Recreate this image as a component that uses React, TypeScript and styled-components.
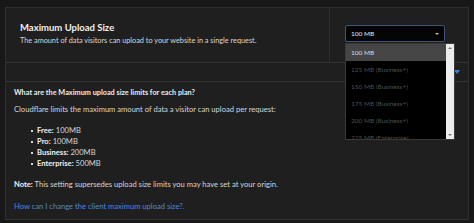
import styled, { createGlobalStyle } from 'styled-components'

const GlobalStyle = createGlobalStyle`
  html, body {
    margin: 0;
    padding: 0;
    background: #181818;
  }
  body {
    font-family: Lato, 'Open Sans', sans-serif;
    color: #e6e6e6;
  }
`

const Page = styled.div`
  width: 474px;
  height: 223px;
  overflow: hidden;
  padding: 7px 5px 0 5px;
  box-sizing: border-box;
`

const Card = styled.div`
  background: #1f1f1f;
  border: 1px solid #2e2e2e;
  border-bottom: none;
`

const SettingRow = styled.div`
  display: grid;
  grid-template-columns: 324px 1fr;
  height: 54px;
  border-bottom: 1px solid #333;
`

const Info = styled.div`
  padding: 13px 0 0 14px;
  border-right: 1px solid #2e2e2e;
`

const Title = styled.div`
  font-size: 9.5px;
  font-weight: 700;
  color: #f0f0f0;
  line-height: 13px;
`

const Description = styled.div`
  margin-top: 1px;
  font-size: 7.3px;
  color: #d8d8d8;
  line-height: 11px;
  white-space: nowrap;
`

const Control = styled.div`
  position: relative;
  padding: 17px 0 0 15px;
`

const Select = styled.div`
  width: 100px;
  height: 17px;
  box-sizing: border-box;
  background: #050505;
  border: 1px solid #3e5478;
  border-radius: 2px;
  display: flex;
  align-items: center;
  justify-content: space-between;
  padding: 0 5px;
  font-size: 6.5px;
  color: #e8e8e8;
`

const Caret = styled.span`
  width: 0;
  height: 0;
  border-left: 2px solid transparent;
  border-right: 2px solid transparent;
  border-top: 2px solid #bbb;
`

const Menu = styled.div`
  position: absolute;
  left: 15px;
  top: 35px;
  width: 108px;
  height: 95px;
  display: flex;
  background: #000;
  border: 1px solid #3a3a3a;
  z-index: 2;
  overflow: hidden;
`

const Options = styled.div`
  flex: 1;
`

const Option = styled.div<{ $active?: boolean }>`
  height: 17px;
  line-height: 17px;
  padding-left: 5px;
  font-size: 6.5px;
  white-space: nowrap;
  background: ${p => (p.$active ? '#454545' : 'transparent')};
  color: ${p => (p.$active ? '#dcdcdc' : '#4e4e4e')};
`

const Scrollbar = styled.div`
  width: 8px;
  background: #ececec;
  display: flex;
  flex-direction: column;
  justify-content: space-between;
  align-items: center;
  padding: 3px 0;
  box-sizing: border-box;
`

const Arrow = styled.span<{ $up?: boolean }>`
  width: 0;
  height: 0;
  border-left: 2px solid transparent;
  border-right: 2px solid transparent;
  ${p => (p.$up ? 'border-bottom: 2px solid #777;' : 'border-top: 2px solid #777;')}
`

const ToggleRow = styled.div`
  height: 18px;
  display: flex;
  justify-content: flex-end;
  align-items: center;
  padding-right: 8px;
  border-bottom: 1px solid #333;
`

const Chevron = styled.span`
  width: 0;
  height: 0;
  border-left: 3.5px solid transparent;
  border-right: 3.5px solid transparent;
  border-top: 4px solid #3d7fe0;
`

const Details = styled.div`
  height: 138px;
  padding: 5px 0 0 8px;
  box-sizing: border-box;
  border-bottom: 1px solid #333;
  font-size: 7.6px;
  line-height: 11px;
  color: #d6d6d6;
`

const Question = styled.div`
  font-size: 7.3px;
  font-weight: 700;
  color: #ececec;
`

const Paragraph = styled.p`
  margin: 6px 0 0;
`

const PlanList = styled.ul`
  margin: 10px 0 0;
  padding-left: 23px;
  list-style: none;
`

const Plan = styled.li`
  position: relative;
  line-height: 11px;
  &::before {
    content: '';
    position: absolute;
    left: -6px;
    top: 5px;
    width: 2px;
    height: 2px;
    background: #d6d6d6;
  }
`

const Strong = styled.strong`
  font-weight: 700;
  color: #f0f0f0;
`

const Note = styled.p`
  margin: 10px 0 0;
`

const HelpLink = styled.a`
  display: block;
  margin-top: 11px;
  color: #4f86dc;
  text-decoration: none;
`

const options = [
  '100 MB',
  '125 MB (Business+)',
  '150 MB (Business+)',
  '175 MB (Business+)',
  '200 MB (Business+)',
  '225 MB (Enterprise)'
]

const plans = [
  ['Free:', '100MB'],
  ['Pro:', '100MB'],
  ['Business:', '200MB'],
  ['Enterprise:', '500MB']
]

export default function App() {
  return (
    <Page>
      <GlobalStyle />
      <Card>
        <SettingRow>
          <Info>
            <Title>Maximum Upload Size</Title>
            <Description>
              The amount of data visitors can upload to your website in a single request.
            </Description>
          </Info>
          <Control>
            <Select>
              100 MB
              <Caret />
            </Select>
            <Menu>
              <Options>
                {options.map((o, i) => (
                  <Option key={o} $active={i === 0}>
                    {o}
                  </Option>
                ))}
              </Options>
              <Scrollbar>
                <Arrow $up />
                <Arrow />
              </Scrollbar>
            </Menu>
          </Control>
        </SettingRow>
        <ToggleRow>
          <Chevron />
        </ToggleRow>
        <Details>
          <Question>What are the Maximum upload size limits for each plan?</Question>
          <Paragraph>
            Cloudflare limits the maximum amount of data a visitor can upload per request:
          </Paragraph>
          <PlanList>
            {plans.map(([name, size]) => (
              <Plan key={name}>
                <Strong>{name}</Strong> {size}
              </Plan>
            ))}
          </PlanList>
          <Note>
            <Strong>Note:</Strong> This setting supersedes upload size limits you may have set at
            your origin.
          </Note>
          <HelpLink href="#">How can I change the client maximum upload size?.</HelpLink>
        </Details>
      </Card>
    </Page>
  )
}
